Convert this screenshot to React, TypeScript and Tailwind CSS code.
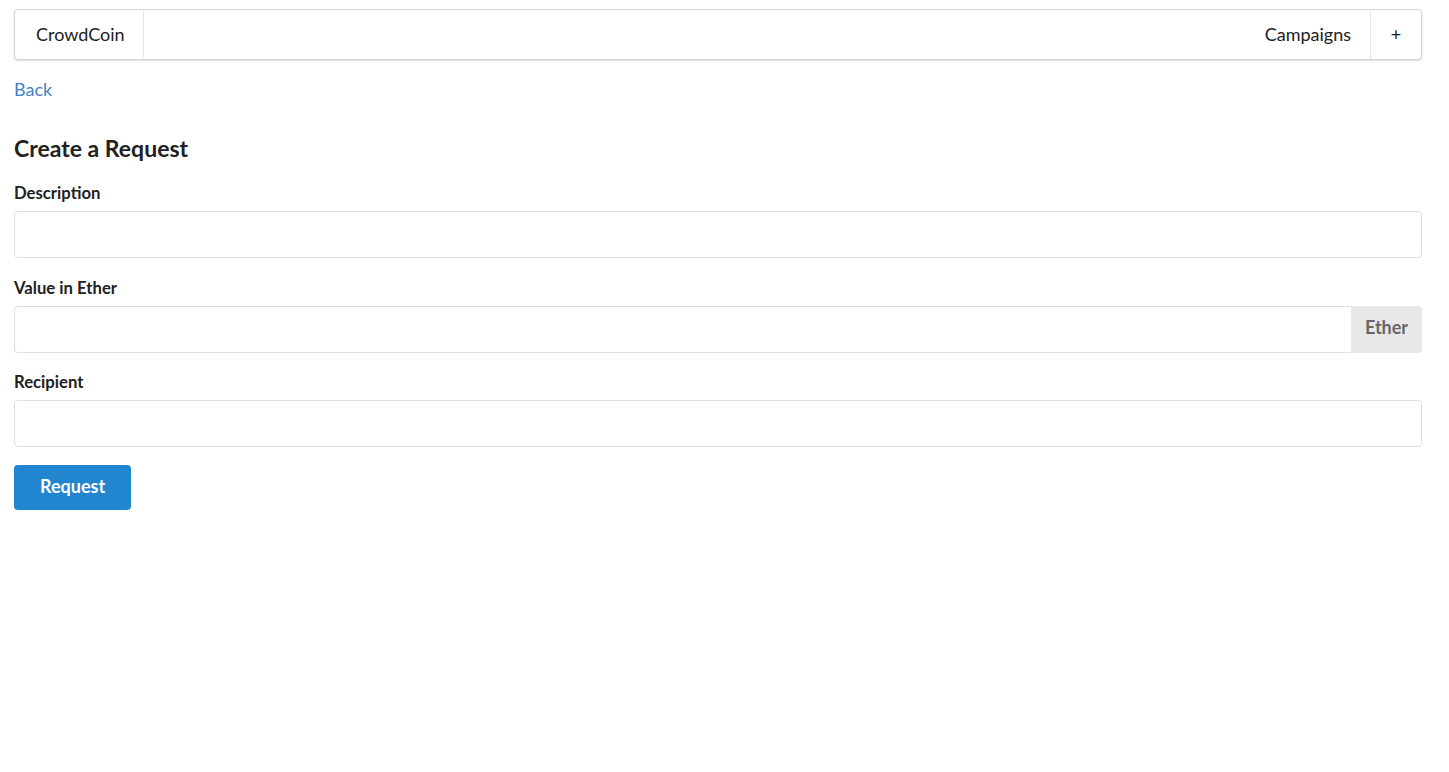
import React from "react";

export default function App() {
  const font = { fontFamily: "Lato, 'Helvetica Neue', Arial, sans-serif" };
  return (
    <div className="min-h-screen bg-white text-[#212121]" style={font}>
      <div className="pl-[14px] pr-[27px] pt-[9px]">
        {/* Menu */}
        <div className="flex h-[51px] items-stretch rounded-[4px] border border-[#d4d4d5] bg-white shadow-[0_1px_2px_0_rgba(34,36,38,0.15)] text-[18px]">
          <div className="flex items-center border-r border-[#e7e7e8] pl-[21px] pr-[18px]">CrowdCoin</div>
          <div className="flex-1" />
          <div className="flex items-center px-[19px]">Campaigns</div>
          <div className="flex w-[51px] items-center justify-center border-l border-[#e7e7e8]">+</div>
        </div>

        <div className="mt-[17px] text-[18px] leading-[25.7px]">
          <a className="text-[#4183c4]" href="#">Back</a>
        </div>

        <h3 className="mt-[30px] text-[23px] font-bold leading-[30px]">Create a Request</h3>

        <form className="mt-[20px]" onSubmit={(e) => e.preventDefault()}>
          <div className="mb-[20px]">
            <label className="mb-[8px] block text-[16.7px] font-bold leading-[20px]">Description</label>
            <input className="block h-[47px] w-full rounded-[4px] border border-[#dededf] px-[18px] text-[18px] outline-none" />
          </div>
          <div className="mb-[19px]">
            <label className="mb-[8px] block text-[16.7px] font-bold leading-[20px]">Value in Ether</label>
            <div className="flex h-[47px]">
              <input className="block h-full min-w-0 flex-1 rounded-l-[4px] border border-r-0 border-[#dededf] px-[18px] text-[18px] outline-none" />
              <div className="flex w-[71px] items-center justify-center rounded-r-[4px] bg-[#e8e8e8] pb-[3px] text-[18px] font-bold text-[#666666]">Ether</div>
            </div>
          </div>
          <div className="mb-[18px]">
            <label className="mb-[8px] block text-[16.7px] font-bold leading-[20px]">Recipient</label>
            <input className="block h-[47px] w-full rounded-[4px] border border-[#dededf] px-[18px] text-[18px] outline-none" />
          </div>
          <button type="submit" className="flex h-[45px] items-center rounded-[4px] bg-[#2185d0] px-[26px] pb-[2px] text-[18px] font-bold text-white">
            Request
          </button>
        </form>
      </div>
    </div>
  );
}
